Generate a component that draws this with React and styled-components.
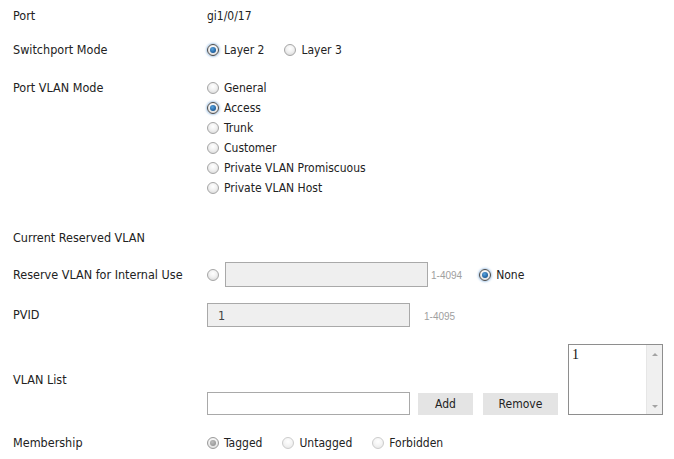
import React from 'react';
import styled, { createGlobalStyle, css } from 'styled-components';

const GlobalStyle = createGlobalStyle`
    html, body {
        margin: 0;
        padding: 0;
        background: #ffffff;
    }
    body {
        font-family: "DejaVu Sans Condensed", "DejaVu Sans", sans-serif;
        font-size: 12px;
        color: #222222;
    }
`

const Form = styled.div`
    display: flex;
    flex-direction: column;
    padding: 0 0 0 13px;
`

const Row = styled.div`
    display: flex;
    flex-flow: row nowrap;
    align-items: ${p => p.$align || 'center'};
    height: ${p => (p.$h ? `${p.$h}px` : 'auto')};
    margin-top: ${p => p.$mt || 0}px;
`

const Label = styled.div`
    width: 194px;
    flex: none;
    font-size: 12.5px;
    line-height: 20px;
    align-self: ${p => p.$self || 'auto'};
    margin-top: ${p => p.$mt || 0}px;
`

const Value = styled.div`
    display: flex;
    flex-flow: row nowrap;
    align-items: center;
`

const Stack = styled.div`
    display: flex;
    flex-direction: column;
`

const OptionGroup = styled.div`
    display: flex;
    flex-flow: row nowrap;
    align-items: center;
    gap: 20px;
    margin-left: ${p => p.$ml || 0}px;
`

const Option = styled.label`
    display: flex;
    align-items: center;
    gap: 5px;
    height: 20px;
    line-height: 20px;
`

const Dot = styled.span`
    position: relative;
    width: 12px;
    height: 12px;
    flex: none;
    box-sizing: border-box;
    border-radius: 50%;
    border: 1px solid #a6a6a6;
    background: radial-gradient(circle at 50% 35%, #ffffff 0%, #f1f1f1 45%, #d2d2d2 100%);
    ${p => p.$checked && css`
        border-color: #4a4a4a;
        box-shadow: 0 0 2px 1px rgba(120, 170, 220, 0.6);
        &::after {
            content: '';
            position: absolute;
            left: 2px;
            top: 2px;
            width: 6px;
            height: 6px;
            border-radius: 50%;
            background: radial-gradient(circle at 40% 35%, #5aa4de 0%, #1c5d9c 70%, #133f6b 100%);
        }
    `}
    ${p => p.$muted && css`
        border-color: #9a9a9a;
        &::after {
            content: '';
            position: absolute;
            left: 2px;
            top: 2px;
            width: 6px;
            height: 6px;
            border-radius: 50%;
            background: radial-gradient(circle at 40% 35%, #bdbdbd 0%, #8a8a8a 100%);
        }
    `}
    ${p => p.$disabled && css`
        border-color: #cccccc;
        background: radial-gradient(circle at 50% 35%, #ffffff 0%, #f4f4f4 50%, #e2e2e2 100%);
    `}
`

const Radio = ({ checked, muted, disabled, children }) => (
    <Option>
        <Dot $checked={checked} $muted={muted} $disabled={disabled} />
        {children && <span>{children}</span>}
    </Option>
)

const TextBox = styled.div`
    box-sizing: border-box;
    width: ${p => p.$w}px;
    height: ${p => p.$h}px;
    margin-left: ${p => p.$ml || 0}px;
    border: 1px solid #a9a9a9;
    background: ${p => (p.$disabled ? '#efefef' : '#ffffff')};
    padding: 0 0 0 10px;
    display: flex;
    align-items: center;
    font-size: 12.5px;
    color: #444444;
`

const Hint = styled.span`
    font-family: "Liberation Sans", Arial, sans-serif;
    font-size: 10px;
    color: #a0a0a0;
    margin-left: ${p => p.$ml}px;
    margin-top: 2px;
`

const Button = styled.button`
    box-sizing: border-box;
    width: ${p => p.$w}px;
    height: 22px;
    margin-left: ${p => p.$ml}px;
    border: none;
    background: #e4e4e4;
    font-family: inherit;
    font-size: 12px;
    color: #222222;
    padding: 0;
`

const ListBox = styled.div`
    box-sizing: border-box;
    width: 95px;
    height: 71px;
    margin-left: 10px;
    border: 1px solid #8e8e8e;
    display: flex;
    flex-flow: row nowrap;
    background: #ffffff;
`

const ListItems = styled.div`
    flex: 1;
    padding: 2px 0 0 3px;
    font-family: "Liberation Serif", serif;
    font-size: 14px;
    line-height: 16px;
    color: #111111;
`

const ScrollBar = styled.div`
    width: 16px;
    flex: none;
    background: #f0f0f0;
    border-left: 1px solid #e6e6e6;
    display: flex;
    flex-direction: column;
    justify-content: space-between;
    align-items: center;
    padding: 8px 0 6px;
    box-sizing: border-box;
`

const Arrow = styled.span`
    width: 0;
    height: 0;
    border-left: 3px solid transparent;
    border-right: 3px solid transparent;
    ${p => (p.$down
        ? css`border-top: 3px solid #a3a3a3;`
        : css`border-bottom: 3px solid #a3a3a3;`)}
`

const ListControls = styled.div`
    display: flex;
    flex-flow: row nowrap;
    align-items: flex-end;
`

export default function App() {
    return (
        <>
            <GlobalStyle />
            <Form>
                <Row $h={24} $mt={4}>
                    <Label>Port</Label>
                    <Value>gi1/0/17</Value>
                </Row>
                <Row $h={24} $mt={10}>
                    <Label>Switchport Mode</Label>
                    <OptionGroup>
                        <Radio checked>Layer 2</Radio>
                        <Radio>Layer 3</Radio>
                    </OptionGroup>
                </Row>
                <Row $mt={16} $align="flex-start">
                    <Label>Port VLAN Mode</Label>
                    <Stack>
                        <Radio>General</Radio>
                        <Radio checked>Access</Radio>
                        <Radio>Trunk</Radio>
                        <Radio>Customer</Radio>
                        <Radio>Private VLAN Promiscuous</Radio>
                        <Radio>Private VLAN Host</Radio>
                    </Stack>
                </Row>
                <Row $h={24} $mt={28}>
                    <Label>Current Reserved VLAN</Label>
                </Row>
                <Row $h={25} $mt={12}>
                    <Label>Reserve VLAN for Internal Use</Label>
                    <Value>
                        <Radio />
                        <TextBox $w={203} $h={25} $ml={6} $disabled />
                        <Hint $ml={3}>1-4094</Hint>
                        <OptionGroup $ml={17}>
                            <Radio checked>None</Radio>
                        </OptionGroup>
                    </Value>
                </Row>
                <Row $h={24} $mt={16}>
                    <Label>PVID</Label>
                    <Value>
                        <TextBox $w={203} $h={24} $disabled>1</TextBox>
                        <Hint $ml={14}>1-4095</Hint>
                    </Value>
                </Row>
                <Row $h={71} $mt={17}>
                    <Label $self="center">VLAN List</Label>
                    <ListControls>
                        <TextBox $w={203} $h={23} />
                        <Button $w={55} $ml={8}>Add</Button>
                        <Button $w={75} $ml={10}>Remove</Button>
                        <ListBox>
                            <ListItems>1</ListItems>
                            <ScrollBar>
                                <Arrow />
                                <Arrow $down />
                            </ScrollBar>
                        </ListBox>
                    </ListControls>
                </Row>
                <Row $h={24} $mt={16}>
                    <Label>Membership</Label>
                    <OptionGroup>
                        <Radio muted>Tagged</Radio>
                        <Radio disabled>Untagged</Radio>
                        <Radio disabled>Forbidden</Radio>
                    </OptionGroup>
                </Row>
            </Form>
        </>
    );
}
